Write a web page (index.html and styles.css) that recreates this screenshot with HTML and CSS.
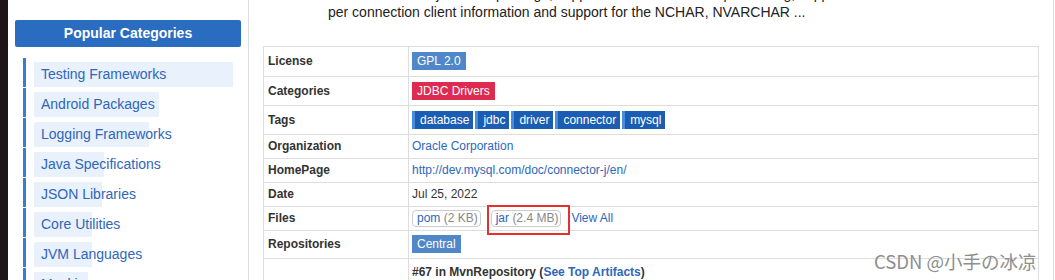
FILE: index.html
```html
<!DOCTYPE html>
<html>
<head>
<meta charset="utf-8">
<link rel="stylesheet" href="styles.css">
</head>
<body>
<div class="page">
  <div class="edge"></div>
  <aside class="side">
    <div class="side-title">Popular Categories</div>
    <ul class="cats">
      <li><a class="cat" style="width:199px">Testing Frameworks</a></li>
      <li><a class="cat" style="width:125px">Android Packages</a></li>
      <li><a class="cat" style="width:115px">Logging Frameworks</a></li>
      <li><a class="cat" style="width:70px">Java Specifications</a></li>
      <li><a class="cat" style="width:68px">JSON Libraries</a></li>
      <li><a class="cat" style="width:58px">Core Utilities</a></li>
      <li><a class="cat" style="width:58px">JVM Languages</a></li>
      <li><a class="cat" style="width:54px">Mocking</a></li>
    </ul>
  </aside>
  <main class="main">
    <p class="desc">variants from the java.time package, support for JDBC-4.x XML processing, support for<br>per connection client information and support for the NCHAR, NVARCHAR ...</p>
    <table class="grid">
      <tr><th class="k">License</th><td class="pad5"><div class="chips"><span class="b lic">GPL 2.0</span></div></td></tr>
      <tr><th class="k">Categories</th><td class="pad5b"><div class="chips"><span class="b cat-b">JDBC Drivers</span></div></td></tr>
      <tr><th class="k">Tags</th><td class="pad5b"><div class="chips"><span class="b tag">database</span><span class="b tag">jdbc</span><span class="b tag">driver</span><span class="b tag">connector</span><span class="b tag">mysql</span></div></td></tr>
      <tr><th class="k">Organization</th><td><a class="lnk">Oracle Corporation</a></td></tr>
      <tr><th class="k">HomePage</th><td><a class="lnk">http://dev.mysql.com/doc/connector-j/en/</a></td></tr>
      <tr><th class="k">Date</th><td>Jul 25, 2022</td></tr>
      <tr><th class="k">Files</th><td class="pad3"><div class="files"><a class="vbtn">pom <span class="sz">(2 KB)</span></a><span class="hl"><a class="vbtn">jar <span class="sz">(2.4 MB)</span></a></span><a class="lnk">View All</a></div></td></tr>
      <tr><th class="k">Repositories</th><td class="pad4"><div class="chips"><span class="b lic">Central</span></div></td></tr>
      <tr><th class="k"></th><td class="rank"><b>#67 in MvnRepository (<a class="lnk">See Top Artifacts</a>)</b><br><b>#3 in JDBC Drivers</b></td></tr>
    </table>
  </main>
</div>
<div class="mark">CSDN @小手の冰凉</div>
</body>
</html>
```

FILE: styles.css
```css
html, body {
  margin: 0;
  padding: 0;
  height: 280px;
  overflow: hidden;
  background: #fff;
  font-family: "Liberation Sans", Arial, sans-serif;
}

.page {
  display: flex;
  align-items: stretch;
  height: 280px;
}

.edge {
  flex: 0 0 8px;
  background: #1f1518;
}

.side {
  flex: 0 0 241px;
  box-sizing: border-box;
  border-right: 1px solid #dcdcdc;
  padding: 20px 7px 0 7px;
}

.side-title {
  height: 27px;
  line-height: 27px;
  background: #2a6cc0;
  color: #fff;
  font-weight: bold;
  font-size: 14px;
  text-align: center;
  border-radius: 2px;
}

.cats {
  list-style: none;
  margin: 11px 0 0 8px;
  padding: 0;
}

.cats li {
  box-sizing: border-box;
  height: 29px;
  margin-bottom: 1px;
  border-left: 3px solid #3a7bd6;
  padding: 4px 0 0 8px;
}

.cat {
  display: block;
  box-sizing: border-box;
  height: 25px;
  line-height: 25px;
  padding-left: 7px;
  background: #e9f1fd;
  color: #2f66b9;
  font-size: 14px;
  white-space: nowrap;
}

.main {
  flex: 0 0 805px;
  box-sizing: border-box;
  border-right: 1px solid #dcdcdc;
  padding: 0 14px;
}

.desc {
  margin: -15px 0 25px 65px;
  font-size: 14px;
  line-height: 18px;
  color: #222;
  white-space: nowrap;
  overflow: hidden;
}

.grid {
  width: 100%;
  border-collapse: collapse;
  border: 1px solid #dddddd;
  font-size: 12px;
  line-height: 15px;
  color: #333;
}

.grid th, .grid td {
  border: 1px solid #dddddd;
  padding: 4px 4px;
  vertical-align: middle;
  text-align: left;
}

.grid td {
  padding-left: 3px;
}

.grid .k {
  width: 136px;
  font-weight: bold;
  color: #333;
}

.grid td.pad5 { padding-top: 5px; padding-bottom: 6px; }
.grid td.pad5b { padding-top: 5px; padding-bottom: 5px; }
.grid td.pad3 { padding-top: 3px; padding-bottom: 3px; }
.grid td.pad4 { padding-top: 4px; padding-bottom: 5px; }
.grid td.rank { padding-top: 6px; vertical-align: top; }

.chips {
  display: flex;
  gap: 2px;
}

.b {
  display: block;
  font-size: 12px;
  line-height: 14px;
  padding: 2px 5px;
  color: #fff;
}

.lic { background: #5087c8; }
.cat-b { background: #dd2c50; }
.tag {
  background: #1b5db3;
  border-left: 3px solid #4a8cdc;
  padding: 2px 4px 2px 5px;
}

.lnk {
  color: #2d67ba;
  text-decoration: none;
}

.files {
  display: flex;
  align-items: center;
  gap: 10px;
}

.vbtn {
  display: block;
  border: 1px solid #cccccc;
  border-radius: 4px;
  padding: 0 2px 0 4px;
  line-height: 15px;
  color: #2d67ba;
}

.sz { color: #888; }

.hl {
  position: relative;
  display: block;
}

.hl::after {
  content: "";
  position: absolute;
  left: -4px;
  right: -9px;
  top: -5px;
  bottom: -8px;
  border: 2px solid #e5302f;
}

.mark {
  position: absolute;
  left: 874px;
  top: 249px;
  font-family: "Noto Sans CJK SC", "Liberation Sans", sans-serif;
  font-size: 18.5px;
  line-height: 24px;
  color: #8e8e8e;
  text-shadow: 0 0 1px #fff;
  white-space: nowrap;
}
```
